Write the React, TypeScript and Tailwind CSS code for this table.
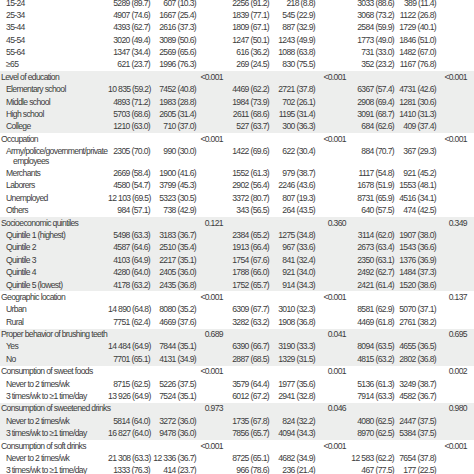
import React from "react";

type Item = { label: string; v: string[]; wrap?: boolean };
type Group = { title?: string; p?: string[]; shade: boolean; items: Item[] };

const grid =
  "grid grid-cols-[108px_42px_46px_27px_46px_46px_31px_48px_42px_31px] items-start";

const groups: Group[] = [
  {
    shade: false,
    items: [
      { label: "15-24", v: ["5289 (89.7)", "607 (10.3)", "2256 (91.2)", "218 (8.8)", "3033 (88.6)", "389 (11.4)"] },
      { label: "25-34", v: ["4907 (74.6)", "1667 (25.4)", "1839 (77.1)", "545 (22.9)", "3068 (73.2)", "1122 (26.8)"] },
      { label: "35-44", v: ["4393 (62.7)", "2616 (37.3)", "1809 (67.1)", "887 (32.9)", "2584 (59.9)", "1729 (40.1)"] },
      { label: "45-54", v: ["3020 (49.4)", "3089 (50.6)", "1247 (50.1)", "1243 (49.9)", "1773 (49.0)", "1846 (51.0)"] },
      { label: "55-64", v: ["1347 (34.4)", "2569 (65.6)", "616 (36.2)", "1088 (63.8)", "731 (33.0)", "1482 (67.0)"] },
      { label: "≥65", v: ["621 (23.7)", "1996 (76.3)", "269 (24.5)", "830 (75.5)", "352 (23.2)", "1167 (76.8)"] },
    ],
  },
  {
    title: "Level of education",
    p: ["<0.001", "<0.001", "<0.001"],
    shade: true,
    items: [
      { label: "Elementary school", v: ["10 835 (59.2)", "7452 (40.8)", "4469 (62.2)", "2721 (37.8)", "6367 (57.4)", "4731 (42.6)"] },
      { label: "Middle school", v: ["4893 (71.2)", "1983 (28.8)", "1984 (73.9)", "702 (26.1)", "2908 (69.4)", "1281 (30.6)"] },
      { label: "High school", v: ["5703 (68.6)", "2605 (31.4)", "2611 (68.6)", "1195 (31.4)", "3091 (68.7)", "1410 (31.3)"] },
      { label: "College", v: ["1210 (63.0)", "710 (37.0)", "527 (63.7)", "300 (36.3)", "684 (62.6)", "409 (37.4)"] },
    ],
  },
  {
    title: "Occupation",
    p: ["<0.001", "<0.001", "<0.001"],
    shade: false,
    items: [
      { label: "Army/police/government/private employees", wrap: true, v: ["2305 (70.0)", "990 (30.0)", "1422 (69.6)", "622 (30.4)", "884 (70.7)", "367 (29.3)"] },
      { label: "Merchants", v: ["2669 (58.4)", "1900 (41.6)", "1552 (61.3)", "979 (38.7)", "1117 (54.8)", "921 (45.2)"] },
      { label: "Laborers", v: ["4580 (54.7)", "3799 (45.3)", "2902 (56.4)", "2246 (43.6)", "1678 (51.9)", "1553 (48.1)"] },
      { label: "Unemployed", v: ["12 103 (69.5)", "5323 (30.5)", "3372 (80.7)", "807 (19.3)", "8731 (65.9)", "4516 (34.1)"] },
      { label: "Others", v: ["984 (57.1)", "738 (42.9)", "343 (56.5)", "264 (43.5)", "640 (57.5)", "474 (42.5)"] },
    ],
  },
  {
    title: "Socioeconomic quintiles",
    p: ["0.121", "0.360", "0.349"],
    shade: true,
    items: [
      { label: "Quintile 1 (highest)", v: ["5498 (63.3)", "3183 (36.7)", "2384 (65.2)", "1275 (34.8)", "3114 (62.0)", "1907 (38.0)"] },
      { label: "Quintile 2", v: ["4587 (64.6)", "2510 (35.4)", "1913 (66.4)", "967 (33.6)", "2673 (63.4)", "1543 (36.6)"] },
      { label: "Quintile 3", v: ["4103 (64.9)", "2217 (35.1)", "1754 (67.6)", "841 (32.4)", "2350 (63.1)", "1376 (36.9)"] },
      { label: "Quintile 4", v: ["4280 (64.0)", "2405 (36.0)", "1788 (66.0)", "921 (34.0)", "2492 (62.7)", "1484 (37.3)"] },
      { label: "Quintile 5 (lowest)", v: ["4178 (63.2)", "2435 (36.8)", "1752 (65.7)", "914 (34.3)", "2421 (61.4)", "1520 (38.6)"] },
    ],
  },
  {
    title: "Geographic location",
    p: ["<0.001", "<0.001", "0.137"],
    shade: false,
    items: [
      { label: "Urban", v: ["14 890 (64.8)", "8080 (35.2)", "6309 (67.7)", "3010 (32.3)", "8581 (62.9)", "5070 (37.1)"] },
      { label: "Rural", v: ["7751 (62.4)", "4669 (37.6)", "3282 (63.2)", "1908 (36.8)", "4469 (61.8)", "2761 (38.2)"] },
    ],
  },
  {
    title: "Proper behavior of brushing teeth",
    p: ["0.689", "0.041", "0.695"],
    shade: true,
    items: [
      { label: "Yes", v: ["14 484 (64.9)", "7844 (35.1)", "6390 (66.7)", "3190 (33.3)", "8094 (63.5)", "4655 (36.5)"] },
      { label: "No", v: ["7701 (65.1)", "4131 (34.9)", "2887 (68.5)", "1329 (31.5)", "4815 (63.2)", "2802 (36.8)"] },
    ],
  },
  {
    title: "Consumption of sweet foods",
    p: ["<0.001", "0.001", "0.002"],
    shade: false,
    items: [
      { label: "Never to 2 times/wk", v: ["8715 (62.5)", "5226 (37.5)", "3579 (64.4)", "1977 (35.6)", "5136 (61.3)", "3249 (38.7)"] },
      { label: "3 times/wk to ≥1 time/day", v: ["13 926 (64.9)", "7524 (35.1)", "6012 (67.2)", "2941 (32.8)", "7914 (63.3)", "4582 (36.7)"] },
    ],
  },
  {
    title: "Consumption of sweetened drinks",
    p: ["0.973", "0.046", "0.980"],
    shade: true,
    items: [
      { label: "Never to 2 times/wk", v: ["5814 (64.0)", "3272 (36.0)", "1735 (67.8)", "824 (32.2)", "4080 (62.5)", "2447 (37.5)"] },
      { label: "3 times/wk to ≥1 time/day", v: ["16 827 (64.0)", "9478 (36.0)", "7856 (65.7)", "4094 (34.3)", "8970 (62.5)", "5384 (37.5)"] },
    ],
  },
  {
    title: "Consumption of soft drinks",
    p: ["<0.001", "<0.001", "<0.001"],
    shade: false,
    items: [
      { label: "Never to 2 times/wk", v: ["21 308 (63.3)", "12 336 (36.7)", "8725 (65.1)", "4682 (34.9)", "12 583 (62.2)", "7654 (37.8)"] },
      { label: "3 times/wk to ≥1 time/day", v: ["1333 (76.3)", "414 (23.7)", "966 (78.6)", "236 (21.4)", "467 (77.5)", "177 (22.5)"] },
    ],
  },
];

function HeaderRow({ title, p }: { title: string; p: string[] }) {
  return (
    <div className={`${grid} h-[12.4px] pt-[1.5px]`}>
      <div className="col-span-3 whitespace-nowrap pl-[1px]">{title}</div>
      <div className="text-right">{p[0]}</div>
      <div className="col-span-2" />
      <div className="text-right">{p[1]}</div>
      <div className="col-span-2" />
      <div className="text-right">{p[2]}</div>
    </div>
  );
}

function ItemRow({ item }: { item: Item }) {
  const [a, b, c, d, e, f] = item.v;
  return (
    <div className={`${grid} ${item.wrap ? "pb-[1.5px]" : "h-[12.4px]"} pt-[1.5px]`}>
      <div className={item.wrap ? "pl-[13px] -indent-[7px]" : "whitespace-nowrap pl-[6px]"}>
        {item.label}
      </div>
      <div className="whitespace-nowrap text-right">{a}</div>
      <div className="whitespace-nowrap text-right">{b}</div>
      <div />
      <div className="whitespace-nowrap text-right">{c}</div>
      <div className="whitespace-nowrap text-right">{d}</div>
      <div />
      <div className="whitespace-nowrap text-right">{e}</div>
      <div className="whitespace-nowrap text-right">{f}</div>
      <div />
    </div>
  );
}

export default function App() {
  return (
    <div className="h-[474px] w-[474px] overflow-hidden bg-white">
      <div className="-mt-[3px] font-['Liberation_Sans',Arial,sans-serif] text-[8.6px] leading-[9.4px] tracking-[-0.65px] text-[#3c3c3c]">
        {groups.map((g, i) => (
          <div key={i} className={g.shade ? "bg-[#edeeed]" : "bg-white"}>
            {g.title && g.p && <HeaderRow title={g.title} p={g.p} />}
            {g.items.map((it) => (
              <ItemRow key={it.label} item={it} />
            ))}
          </div>
        ))}
      </div>
    </div>
  );
}
